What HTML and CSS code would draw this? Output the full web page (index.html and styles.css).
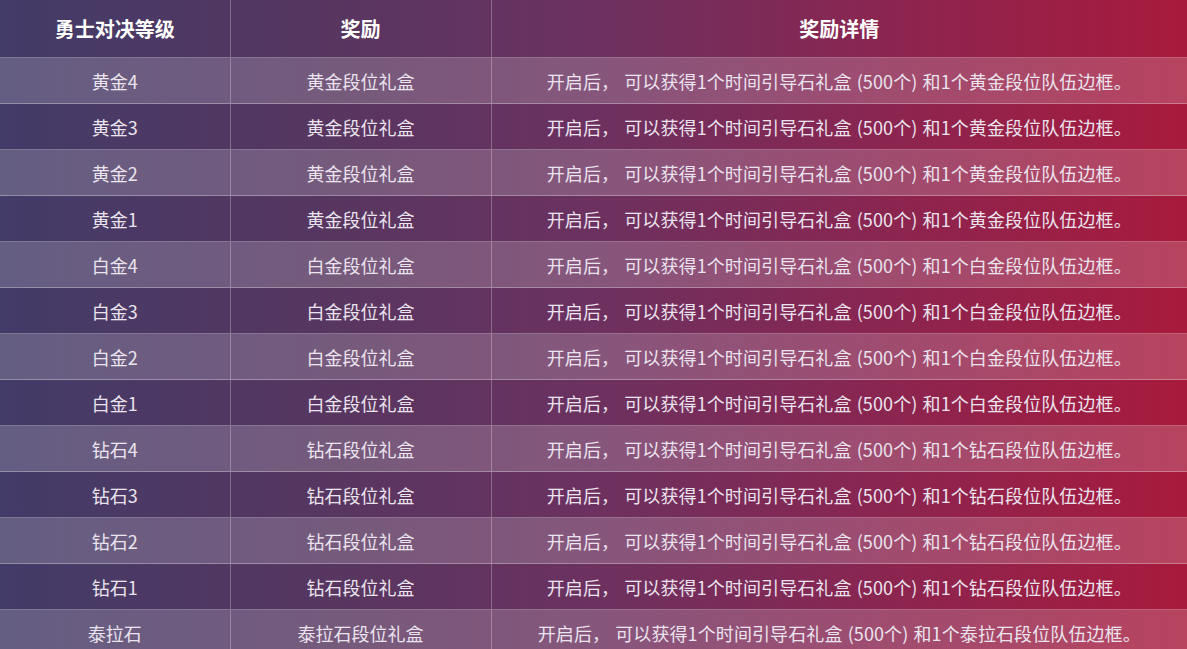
FILE: index.html
```html
<!DOCTYPE html>
<html lang="zh-CN">
<head>
<meta charset="utf-8">
<title>勇士对决等级奖励</title>
<link rel="stylesheet" href="styles.css">
</head>
<body>
<div class="board">
  <table class="rewards">
    <colgroup>
      <col class="col-rank">
      <col class="col-reward">
      <col class="col-detail">
    </colgroup>
    <thead>
      <tr><th>勇士对决等级</th><th>奖励</th><th>奖励详情</th></tr>
    </thead>
    <tbody>
      <tr><td>黄金4</td><td>黄金段位礼盒</td><td class="detail">开启后， 可以获得1个时间引导石礼盒 (500个) 和1个黄金段位队伍边框。</td></tr>
      <tr><td>黄金3</td><td>黄金段位礼盒</td><td class="detail">开启后， 可以获得1个时间引导石礼盒 (500个) 和1个黄金段位队伍边框。</td></tr>
      <tr><td>黄金2</td><td>黄金段位礼盒</td><td class="detail">开启后， 可以获得1个时间引导石礼盒 (500个) 和1个黄金段位队伍边框。</td></tr>
      <tr><td>黄金1</td><td>黄金段位礼盒</td><td class="detail">开启后， 可以获得1个时间引导石礼盒 (500个) 和1个黄金段位队伍边框。</td></tr>
      <tr><td>白金4</td><td>白金段位礼盒</td><td class="detail">开启后， 可以获得1个时间引导石礼盒 (500个) 和1个白金段位队伍边框。</td></tr>
      <tr><td>白金3</td><td>白金段位礼盒</td><td class="detail">开启后， 可以获得1个时间引导石礼盒 (500个) 和1个白金段位队伍边框。</td></tr>
      <tr><td>白金2</td><td>白金段位礼盒</td><td class="detail">开启后， 可以获得1个时间引导石礼盒 (500个) 和1个白金段位队伍边框。</td></tr>
      <tr><td>白金1</td><td>白金段位礼盒</td><td class="detail">开启后， 可以获得1个时间引导石礼盒 (500个) 和1个白金段位队伍边框。</td></tr>
      <tr><td>钻石4</td><td>钻石段位礼盒</td><td class="detail">开启后， 可以获得1个时间引导石礼盒 (500个) 和1个钻石段位队伍边框。</td></tr>
      <tr><td>钻石3</td><td>钻石段位礼盒</td><td class="detail">开启后， 可以获得1个时间引导石礼盒 (500个) 和1个钻石段位队伍边框。</td></tr>
      <tr><td>钻石2</td><td>钻石段位礼盒</td><td class="detail">开启后， 可以获得1个时间引导石礼盒 (500个) 和1个钻石段位队伍边框。</td></tr>
      <tr><td>钻石1</td><td>钻石段位礼盒</td><td class="detail">开启后， 可以获得1个时间引导石礼盒 (500个) 和1个钻石段位队伍边框。</td></tr>
      <tr><td>泰拉石</td><td>泰拉石段位礼盒</td><td class="detail">开启后， 可以获得1个时间引导石礼盒 (500个) 和1个泰拉石段位队伍边框。</td></tr>
    </tbody>
  </table>
</div>
</body>
</html>
```

FILE: styles.css
```css
html, body {
  margin: 0;
  padding: 0;
}

body {
  background: #433b68;
  font-family: "Noto Sans CJK SC", "Noto Sans", sans-serif;
}

.board {
  width: 1187px;
  background: linear-gradient(90deg, #433b68 0%, #573660 28%, #6c3160 50%, #8b2550 75%, #a81a3c 100%);
}

.rewards {
  width: 100%;
  border-collapse: collapse;
  table-layout: fixed;
}

.col-rank { width: 230px; }
.col-reward { width: 261px; }
.col-detail { width: auto; }

.rewards th,
.rewards td {
  text-align: center;
  padding: 0;
  border-left: 1px solid rgba(255, 255, 255, 0.28);
  white-space: nowrap;
}

.rewards th:first-child,
.rewards td:first-child {
  border-left: none;
}

.rewards th {
  height: 57px;
  font-size: 20px;
  font-weight: 700;
  color: #ffffff;
  border-bottom: 1px solid rgba(255, 255, 255, 0.3);
}

.rewards td {
  height: 45px;
  font-size: 18px;
  font-weight: 400;
  color: #ebe4ee;
  border-bottom: 1px solid rgba(255, 255, 255, 0.3);
}

.rewards td.detail {
  letter-spacing: 0.1px;
  word-spacing: 1px;
}

.rewards tbody tr:nth-child(odd) {
  background: rgba(255, 255, 255, 0.18);
}
```
